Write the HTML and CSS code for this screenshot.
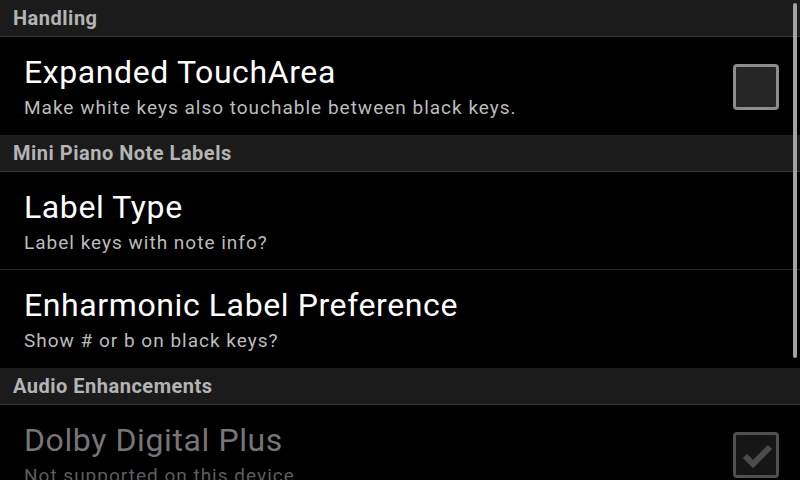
FILE: index.html
```html
<!DOCTYPE html>
<html lang="en">
<head>
    <meta charset="UTF-8">
    <meta name="viewport" content="width=device-width, initial-scale=1.0">
    <title>Settings</title>
    <link rel="stylesheet" href="styles.css">
</head>
<body>
    <div class="screen">
        <div class="group-header">Handling</div>
        <div class="pref">
            <div class="pref-text">
                <div class="pref-title">Expanded TouchArea</div>
                <div class="pref-summary">Make white keys also touchable between black keys.</div>
            </div>
            <div class="checkbox"></div>
        </div>

        <div class="group-header">Mini Piano Note Labels</div>
        <div class="pref divided">
            <div class="pref-text">
                <div class="pref-title">Label Type</div>
                <div class="pref-summary">Label keys with note info?</div>
            </div>
        </div>
        <div class="pref">
            <div class="pref-text">
                <div class="pref-title">Enharmonic Label Preference</div>
                <div class="pref-summary">Show # or b on black keys?</div>
            </div>
        </div>

        <div class="group-header">Audio Enhancements</div>
        <div class="pref disabled">
            <div class="pref-text">
                <div class="pref-title">Dolby Digital Plus</div>
                <div class="pref-summary">Not supported on this device</div>
            </div>
            <div class="checkbox checked">
                <svg width="40" height="40" viewBox="0 0 40 40">
                    <polyline points="9,21 17,29 34,12" fill="none" stroke="#4b4b4b" stroke-width="6" stroke-linejoin="miter"/>
                </svg>
            </div>
        </div>

        <div class="scrollbar"></div>
    </div>
</body>
</html>
```

FILE: styles.css
```css
html, body {
    margin: 0;
    padding: 0;
    background-color: #000000;
}
body {
    font-family: Roboto, "Noto Sans", sans-serif;
    width: 800px;
    height: 480px;
    overflow: hidden;
}
.screen {
    position: relative;
    height: 480px;
}
.group-header {
    height: 36px;
    line-height: 37px;
    padding-left: 13px;
    background-color: #1b1b1b;
    border-bottom: 1px solid #393939;
    color: #b4b4b4;
    font-size: 20px;
    font-weight: bold;
    letter-spacing: 0.5px;
}
.pref {
    display: flex;
    align-items: flex-start;
    height: 80px;
    padding: 17px 21px 0 24px;
    border-bottom: 1px solid #000000;
}
.pref.divided {
    border-bottom-color: #262626;
}
.pref-text {
    flex: 1;
}
.pref-title {
    color: #ffffff;
    font-size: 32px;
    line-height: 36px;
    letter-spacing: 0.6px;
}
.pref-summary {
    margin-top: 6px;
    color: #bcbcbc;
    font-size: 19px;
    line-height: 24px;
    letter-spacing: 1px;
    white-space: nowrap;
}
.checkbox {
    margin-top: 10px;
    width: 40px;
    height: 40px;
    border: 3px solid #8c8c8c;
    border-radius: 4px;
    background-color: #262626;
}
.disabled .pref-title {
    color: #767676;
}
.disabled .pref-summary {
    color: #5e5e5e;
}
.checkbox.checked {
    border-color: #505050;
    background-color: #161616;
}
.checkbox svg {
    display: block;
}
.scrollbar {
    position: absolute;
    top: 3px;
    right: 3px;
    width: 4px;
    height: 355px;
    border-radius: 2px;
    background-color: #a3a3a3;
}
```
